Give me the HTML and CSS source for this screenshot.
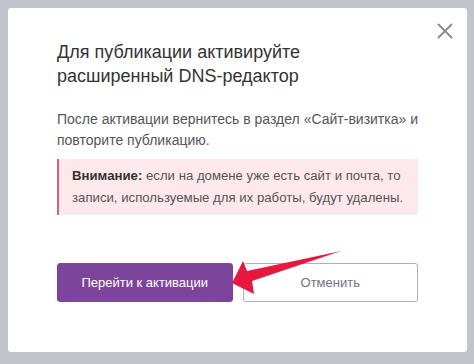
FILE: index.html
```html
<!DOCTYPE html>
<html lang="ru">
<head>
<meta charset="utf-8">
<link rel="stylesheet" href="styles.css">
</head>
<body>
<div class="backdrop">
  <div class="modal">
    <button class="close" aria-label="Закрыть">
      <svg width="16" height="16" viewBox="0 0 16 16"><path d="M1 1 L15 15 M15 1 L1 15" stroke="#8a8a8e" stroke-width="1.8" fill="none"/></svg>
    </button>
    <h1 class="title">Для публикации активируйте<br>расширенный DNS-редактор</h1>
    <p class="text">После активации вернитесь в раздел «Сайт-визитка» и<br>повторите публикацию.</p>
    <div class="alert"><b>Внимание:</b> если на домене уже есть сайт и почта, то<br>записи, используемые для их работы, будут удалены.</div>
    <div class="actions">
      <button class="btn btn-primary">Перейти к активации</button>
      <button class="btn btn-secondary">Отменить</button>
    </div>
    <svg class="arrow" width="474" height="364" viewBox="0 0 474 364">
      <polygon points="232,283 243,261 247,271 341,251 252,281 254,294" fill="#e8173f"/>
    </svg>
  </div>
</div>
</body>
</html>
```
FILE: styles.css
```css
html, body {
  margin: 0;
  padding: 0;
}
body {
  background: #c3c5cc;
  font-family: "Liberation Sans", Arial, sans-serif;
  width: 474px;
  height: 364px;
  overflow: hidden;
}
.backdrop {
  padding: 8px 7px 0 8px;
}
.modal {
  position: relative;
  box-sizing: border-box;
  width: 459px;
  height: 344px;
  background: #fff;
  border-radius: 3px;
  padding: 32px 49px 0 49px;
}
.close {
  position: absolute;
  top: 15px;
  right: 14px;
  width: 16px;
  height: 16px;
  padding: 0;
  border: 0;
  background: none;
}
.close svg { display: block; }
.title {
  margin: 0;
  font-size: 18px;
  line-height: 24px;
  font-weight: normal;
  color: #333;
}
.text {
  margin: 21px 0 0 0;
  font-size: 14px;
  line-height: 21px;
  color: #555;
  white-space: nowrap;
}
.alert {
  margin-top: 8px;
  background: #fde9eb;
  border-left: 2px solid #d9606f;
  padding: 6px 0 6px 13px;
  font-size: 13.2px;
  line-height: 22px;
  color: #555;
  white-space: nowrap;
}
.alert b { color: #333; }
.actions {
  display: flex;
  gap: 10px;
  margin-top: 48px;
}
.btn {
  flex: 1;
  height: 39px;
  border-radius: 3px;
  font-family: inherit;
  font-size: 13px;
  padding: 0;
}
.btn-primary {
  background: #7c459b;
  border: 1px solid #7c459b;
  color: #fff;
}
.btn-secondary {
  background: #fff;
  border: 1px solid #b9a6c8;
  color: #7b6f86;
}
.arrow {
  position: absolute;
  left: -8px;
  top: -8px;
  pointer-events: none;
}
```
